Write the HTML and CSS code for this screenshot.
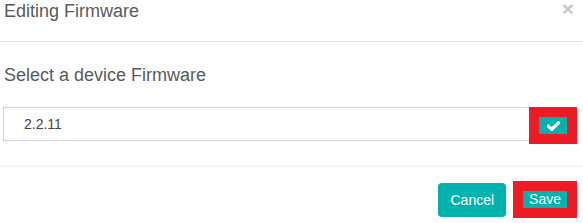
FILE: index.html
```html
<!DOCTYPE html>
<html lang="en">
<head>
    <meta charset="UTF-8">
    <title>Editing Firmware</title>
    <link rel="stylesheet" href="styles.css">
</head>
<body>
    <div class="modal-content">
        <div class="modal-header">
            <h4 class="modal-title">Editing Firmware</h4>
            <button class="close" type="button">&times;</button>
        </div>

        <div class="modal-body">
            <label for="firmware-input">Select a device Firmware</label>
            <div class="input-group">
                <input type="text" id="firmware-input" value="2.2.11">
                <button class="btn btn-flagged btn-check" type="button">
                    <svg width="13" height="10" viewBox="0 0 13 10">
                        <path d="M1.3 5.2 L4.8 8.4 L11.6 1.6" fill="none" stroke="#fff" stroke-width="3.2" stroke-linecap="square"/>
                    </svg>
                </button>
            </div>
        </div>

        <div class="modal-footer">
            <button class="btn btn-teal" type="button">Cancel</button>
            <button class="btn btn-flagged" type="button">Save</button>
        </div>
    </div>
</body>
</html>
```

FILE: styles.css
```css
body {
    margin: 0;
    font-family: "Liberation Sans", Arial, sans-serif;
    background-color: #fff;
    color: #333;
}

.modal-content {
    width: 583px;
}

.modal-header {
    display: flex;
    justify-content: space-between;
    align-items: flex-start;
    height: 41px;
    padding: 0 9px 0 4px;
    border-bottom: 1px solid #e5e5e5;
}

.modal-title {
    margin: 0;
    font-size: 18px;
    font-weight: normal;
    line-height: 22px;
    color: #5a5a5a;
}

.close {
    padding: 0;
    border: none;
    background: none;
    font-family: "Liberation Sans", Arial, sans-serif;
    font-size: 21px;
    font-weight: bold;
    line-height: 17px;
    color: #c9c9c9;
    cursor: pointer;
}

.modal-body {
    padding: 22px 6px 22px 3px;
    height: 80px;
}

label {
    display: block;
    margin-left: 1px;
    margin-bottom: 21px;
    font-size: 18px;
    line-height: 22px;
    color: #5a5a5a;
}

.input-group {
    display: flex;
    align-items: flex-start;
}

.input-group input {
    flex: 1;
    height: 34px;
    box-sizing: border-box;
    margin: 0;
    padding: 0 20px;
    border: 1px solid #d2d2dc;
    border-right: none;
    font-family: "Liberation Sans", Arial, sans-serif;
    font-size: 14px;
    color: #444;
    outline: none;
}

.btn {
    margin: 0;
    font-family: "Liberation Sans", Arial, sans-serif;
    font-size: 14px;
    color: #fff;
    cursor: pointer;
}

.btn-teal {
    height: 34px;
    padding: 0 12px;
    border: none;
    border-radius: 4px;
    background-color: #00b3ae;
    line-height: 34px;
}

/* highlighted buttons: red frame round a teal face */
.btn-flagged {
    padding: 0 6px;
    border: 10px solid #ed1c24;
    background-color: #00b3ae;
    line-height: 17px;
}

.btn-check {
    display: flex;
    align-items: center;
    justify-content: center;
    width: 48px;
    height: 37px;
    padding: 0;
}

.modal-footer {
    display: flex;
    justify-content: flex-end;
    align-items: center;
    gap: 7px;
    padding: 14px 6px 0;
    border-top: 1px solid #efefef;
}
```
